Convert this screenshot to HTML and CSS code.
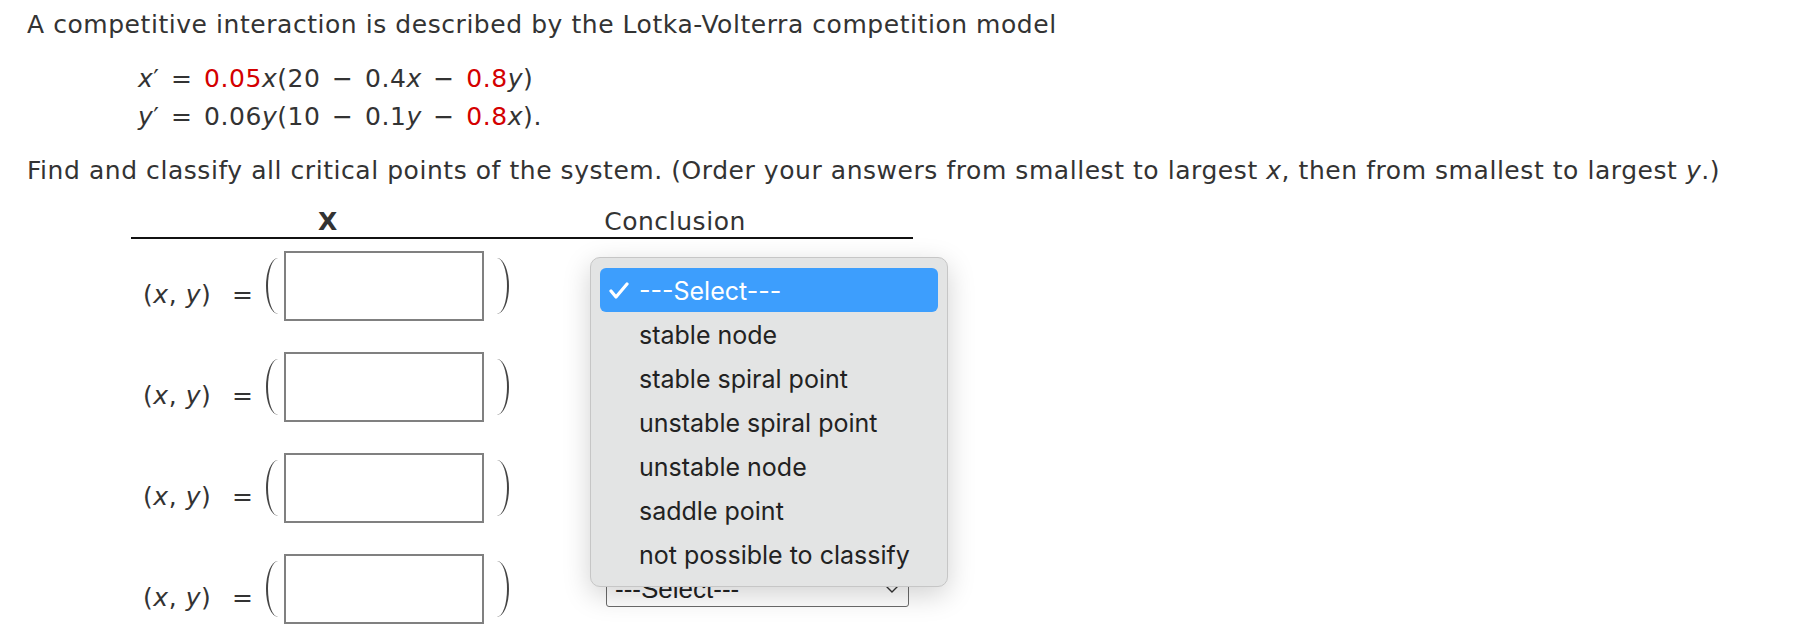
FILE: index.html
```html
<!DOCTYPE html>
<html lang="en">
<head>
  <meta charset="UTF-8" />
  <meta name="viewport" content="width=device-width, initial-scale=1.0" />
  <title>Lotka-Volterra Critical Points</title>
  <link rel="stylesheet" href="styles.css">
</head>
<body>
  <div class="page">
    <p class="text">A competitive interaction is described by the Lotka-Volterra competition model</p>

    <div class="system">
      <div><i>x</i>′ = <span class="hl">0.05</span><i>x</i>(20 − 0.4<i>x</i> − <span class="hl">0.8</span><i>y</i>)</div>
      <div><i>y</i>′ = 0.06<i>y</i>(10 − 0.1<i>y</i> − <span class="hl">0.8</span><i>x</i>).</div>
    </div>

    <p class="text">Find and classify all critical points of the system. (Order your answers from smallest to largest <i>x</i>, then from smallest to largest <i>y</i>.)</p>

    <div class="answers">
      <div class="answers-head">
        <div class="col-x">X</div>
        <div class="col-c">Conclusion</div>
      </div>

      <div class="row">
        <span class="pt-label">(<i>x</i>, <i>y</i>)</span>
        <span class="eq">=</span>
        <span class="paren paren-l"></span>
        <input class="pt-input" type="text">
        <span class="paren paren-r"></span>
        <div class="select"><span>---Select---</span><svg width="14" height="8" viewBox="0 0 14 8"><polyline points="1,1 7,7 13,1" fill="none" stroke="#333" stroke-width="1.4"/></svg></div>
      </div>

      <div class="row">
        <span class="pt-label">(<i>x</i>, <i>y</i>)</span>
        <span class="eq">=</span>
        <span class="paren paren-l"></span>
        <input class="pt-input" type="text">
        <span class="paren paren-r"></span>
        <div class="select"><span>---Select---</span><svg width="14" height="8" viewBox="0 0 14 8"><polyline points="1,1 7,7 13,1" fill="none" stroke="#333" stroke-width="1.4"/></svg></div>
      </div>

      <div class="row">
        <span class="pt-label">(<i>x</i>, <i>y</i>)</span>
        <span class="eq">=</span>
        <span class="paren paren-l"></span>
        <input class="pt-input" type="text">
        <span class="paren paren-r"></span>
        <div class="select"><span>---Select---</span><svg width="14" height="8" viewBox="0 0 14 8"><polyline points="1,1 7,7 13,1" fill="none" stroke="#333" stroke-width="1.4"/></svg></div>
      </div>

      <div class="row">
        <span class="pt-label">(<i>x</i>, <i>y</i>)</span>
        <span class="eq">=</span>
        <span class="paren paren-l"></span>
        <input class="pt-input" type="text">
        <span class="paren paren-r"></span>
        <div class="select"><span>---Select---</span><svg width="14" height="8" viewBox="0 0 14 8"><polyline points="1,1 7,7 13,1" fill="none" stroke="#333" stroke-width="1.4"/></svg></div>
      </div>
    </div>

    <!-- open dropdown of the first row -->
    <ul class="menu">
      <li class="active"><svg class="tick" width="20" height="17" viewBox="0 0 20 17"><polyline points="2,9 7,15 18,2" fill="none" stroke="#fff" stroke-width="3.2" stroke-linecap="round" stroke-linejoin="round"/></svg>---Select---</li>
      <li>stable node</li>
      <li>stable spiral point</li>
      <li>unstable spiral point</li>
      <li>unstable node</li>
      <li>saddle point</li>
      <li>not possible to classify</li>
    </ul>
  </div>
</body>
</html>
```

FILE: styles.css
```css
body {
  margin: 0;
  background: #fff;
  color: #333;
  font-family: "DejaVu Sans", Verdana, sans-serif;
  font-size: 25px;
  letter-spacing: 0.55px;
}

.page {
  position: relative;
  padding: 6px 0 0 27px;
  height: 620px;
  overflow: hidden;
}

.text {
  margin: 0;
  line-height: 38px;
}

.system {
  margin: 16px 0 16px 111px;
  line-height: 38px;
  word-spacing: 3px;
}

.hl {
  color: #d40000;
}

.answers {
  margin: 16px 0 0 104px;
  width: 782px;
}

.answers-head {
  display: flex;
  line-height: 31px;
  border-bottom: 2px solid #111;
  margin-bottom: 12px;
}

.col-x {
  width: 394px;
  text-align: center;
  font-weight: bold;
}

.col-c {
  width: 300px;
  text-align: center;
}

.row {
  display: flex;
  align-items: center;
  height: 70px;
  margin-bottom: 31px;
}

.pt-label {
  width: 89px;
  margin-left: 12px;
  padding-top: 17px;
}

.eq {
  width: 34px;
  padding-top: 17px;
}

.paren {
  height: 56px;
  width: 12px;
  box-sizing: border-box;
}

.paren-l {
  border-left: 2px solid #444;
  border-radius: 12px 0 0 12px / 28px 0 0 28px;
  margin-right: 6px;
}

.paren-r {
  border-right: 2px solid #444;
  border-radius: 0 12px 12px 0 / 0 28px 28px 0;
  margin-left: 13px;
}

.pt-input {
  width: 200px;
  height: 70px;
  box-sizing: border-box;
  border: 2px solid #808080;
  margin: 0;
  padding: 0 6px;
  font: inherit;
}

.select {
  display: flex;
  align-items: center;
  justify-content: space-between;
  box-sizing: border-box;
  width: 303px;
  height: 36px;
  margin-left: 97px;
  padding: 0 9px 0 8px;
  border: 1.5px solid #6b6b6b;
  border-radius: 3px;
  font-family: "Liberation Sans", Arial, sans-serif;
  font-size: 26px;
  letter-spacing: 0;
  color: #222;
}

.menu {
  position: absolute;
  left: 590px;
  top: 257px;
  width: 358px;
  box-sizing: border-box;
  margin: 0;
  padding: 10px 9px 10px;
  list-style: none;
  background: #e3e4e4;
  border: 1px solid #c6c6c6;
  border-radius: 10px;
  box-shadow: 0 8px 28px rgba(0, 0, 0, 0.18);
  font-family: Inter, "Noto Sans", sans-serif;
  font-size: 25px;
  letter-spacing: 0;
  color: #222;
}

.menu li {
  position: relative;
  height: 44px;
  box-sizing: border-box;
  padding: 2px 0 0 39px;
  line-height: 42px;
  border-radius: 6px;
}

.menu li.active {
  background: #3d9efd;
  color: #fff;
}

.tick {
  position: absolute;
  left: 9px;
  top: 14px;
}
```
